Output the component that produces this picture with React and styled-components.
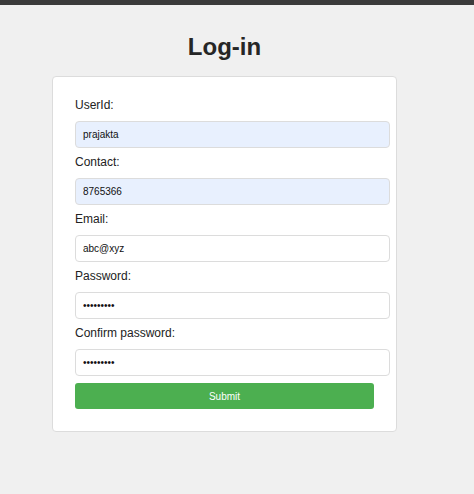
import React from 'react';
import styled, { createGlobalStyle } from 'styled-components';

const GlobalStyle = createGlobalStyle`
  html, body {
    margin: 0;
    padding: 0;
    background: #f0f0f0;
    font-family: 'Liberation Sans', Arial, sans-serif;
  }
`;

const TopBar = styled.div`
  height: 5px;
  background: #3b3b3b;
`;

const Page = styled.main`
  width: 449px;
  display: flex;
  flex-direction: column;
  align-items: center;
`;

const Title = styled.h1`
  margin: 28px 0 15px;
  font-size: 24px;
  line-height: 28px;
  font-weight: bold;
  color: #262626;
`;

const Card = styled.form`
  width: 299px;
  padding: 21px 22px 22px;
  background: #fff;
  border: 1px solid #dcdcdc;
  border-radius: 4px;
`;

const Field = styled.div`
  margin-bottom: 7px;
`;

const Label = styled.label`
  display: block;
  font-size: 12px;
  line-height: 14px;
  color: #222;
  margin-bottom: 9px;
`;

const Input = styled.input`
  display: block;
  width: 100%;
  height: 13px;
  padding: 6px 7px;
  font-family: 'Liberation Sans', Arial, sans-serif;
  font-size: 10px;
  color: #111;
  background: ${(p) => (p.$filled ? '#e8f0fe' : '#fff')};
  border: 1px solid #dcdcdc;
  border-radius: 4px;
  outline: none;
`;

const Submit = styled.button`
  display: block;
  width: 100%;
  height: 26px;
  margin-top: 7px;
  background: #4caf50;
  color: #fff;
  border: none;
  border-radius: 3px;
  font-family: 'Liberation Sans', Arial, sans-serif;
  font-size: 10px;
`;

const fields = [
  { label: 'UserId:', value: 'prajakta', type: 'text', filled: true },
  { label: 'Contact:', value: '8765366', type: 'text', filled: true },
  { label: 'Email:', value: 'abc@xyz', type: 'text' },
  { label: 'Password:', value: '123456789', type: 'password' },
  { label: 'Confirm password:', value: '123456789', type: 'password' },
];

const App = () => (
  <>
    <GlobalStyle />
    <TopBar />
    <Page>
      <Title>Log-in</Title>
      <Card onSubmit={(e) => e.preventDefault()}>
        {fields.map((f) => (
          <Field key={f.label}>
            <Label>{f.label}</Label>
            <Input type={f.type} defaultValue={f.value} $filled={f.filled} readOnly />
          </Field>
        ))}
        <Submit type="submit">Submit</Submit>
      </Card>
    </Page>
  </>
);

export default App;
